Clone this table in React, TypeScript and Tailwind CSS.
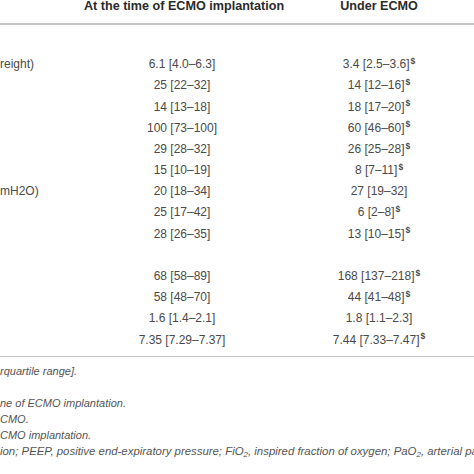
import React from 'react'

interface Row {
  label?: string
  atImplant?: string
  underEcmo?: string
  sig?: boolean
}

const rows: Row[] = [
  {},
  { label: 'reight)', atImplant: '6.1 [4.0–6.3]', underEcmo: '3.4 [2.5–3.6]', sig: true },
  { atImplant: '25 [22–32]', underEcmo: '14 [12–16]', sig: true },
  { atImplant: '14 [13–18]', underEcmo: '18 [17–20]', sig: true },
  { atImplant: '100 [73–100]', underEcmo: '60 [46–60]', sig: true },
  { atImplant: '29 [28–32]', underEcmo: '26 [25–28]', sig: true },
  { atImplant: '15 [10–19]', underEcmo: '8 [7–11]', sig: true },
  { label: 'mH2O)', atImplant: '20 [18–34]', underEcmo: '27 [19–32]' },
  { atImplant: '25 [17–42]', underEcmo: '6 [2–8]', sig: true },
  { atImplant: '28 [26–35]', underEcmo: '13 [10–15]', sig: true },
  {},
  { atImplant: '68 [58–89]', underEcmo: '168 [137–218]', sig: true },
  { atImplant: '58 [48–70]', underEcmo: '44 [41–48]', sig: true },
  { atImplant: '1.6 [1.4–2.1]', underEcmo: '1.8 [1.1–2.3]' },
  { atImplant: '7.35 [7.29–7.37]', underEcmo: '7.44 [7.33–7.47]', sig: true },
]

function Sig() {
  return <sup className="text-[8.5px] font-bold ml-[1px]">$</sup>
}

export default function App() {
  return (
    <div className="w-[474px] h-[474px] overflow-hidden bg-white font-['Liberation_Sans',Arial,sans-serif]">
      {/* Header */}
      <div className="grid grid-cols-[84px_196px_198px] h-[25px] border-b-2 border-[#c6c6c6] text-[12.6px] font-bold leading-[12px] text-[#2b2b2b]">
        <div />
        <div className="text-center whitespace-nowrap">At the time of ECMO implantation</div>
        <div className="text-center whitespace-nowrap">Under ECMO</div>
      </div>

      {/* Body */}
      <div className="pt-[7.4px] pb-[6px] border-b-[1.5px] border-[#c6c6c6] text-[12px] text-[#4a4a4a]">
        {rows.map((r, i) => (
          <div key={i} className="grid grid-cols-[84px_196px_198px] h-[21.2px] items-center">
            <div className="whitespace-nowrap">{r.label}</div>
            <div className="text-center whitespace-nowrap">{r.atImplant}</div>
            <div className="text-center whitespace-nowrap">
              {r.underEcmo}
              {r.sig && <Sig />}
            </div>
          </div>
        ))}
      </div>

      {/* Footnotes */}
      <div className="pt-[6px] text-[11px] italic leading-[16px] text-[#555]">
        <p className="whitespace-nowrap">rquartile range].</p>
        <p className="h-[16px]" />
        <p className="whitespace-nowrap">ne of ECMO implantation.</p>
        <p className="whitespace-nowrap">CMO.</p>
        <p className="whitespace-nowrap">CMO implantation.</p>
        <p className="whitespace-nowrap text-[11.4px]">
          ion; PEEP, positive end-expiratory pressure; FiO<sub className="text-[8px]">2</sub>, inspired fraction of oxygen; PaO<sub className="text-[8px]">2</sub>, arterial pa
        </p>
      </div>
    </div>
  )
}
